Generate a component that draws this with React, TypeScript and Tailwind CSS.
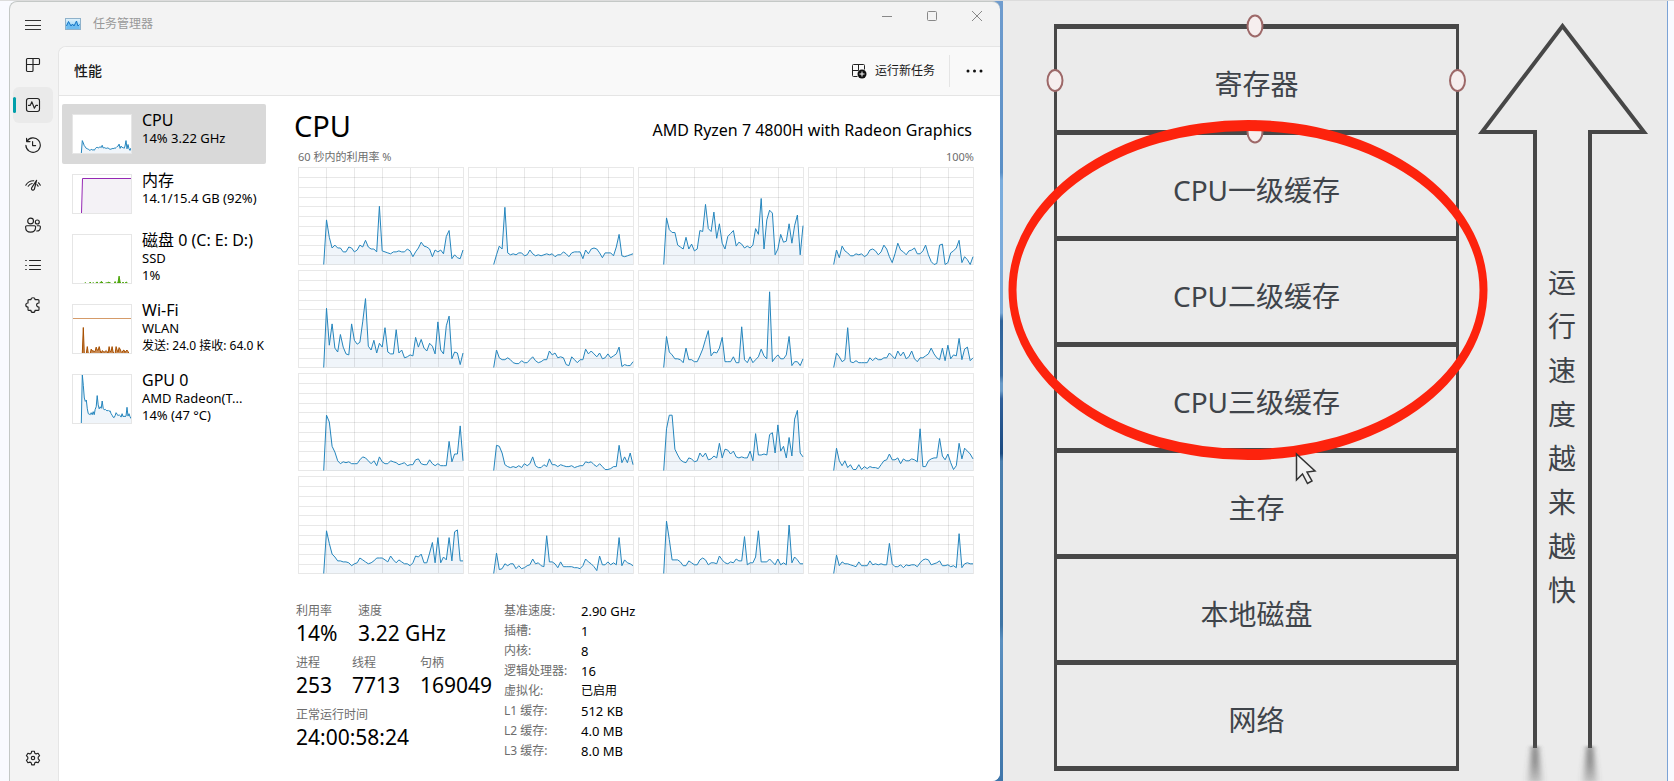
import { ReactNode } from "react";

const CORES: number[][] = [
  [0,46,28,17,20,17,17,13,13,18,17,13,15,20,18,25,18,16,16,13,60,14,13,12,11,13,13,14,13,13,16,14,8,13,17,23,19,18,16,8,15,13,15,11,29,35,6,10,7,6,15],
  [0,10,19,16,59,12,10,11,10,12,12,9,10,15,11,9,10,9,10,11,10,11,8,10,10,13,11,8,12,13,13,13,6,15,11,16,17,16,12,7,12,12,12,9,18,31,9,8,9,10,11],
  [0,48,36,33,33,20,18,16,28,16,21,14,16,35,34,62,37,34,54,27,42,22,16,29,32,35,19,23,21,17,19,17,20,37,31,68,16,46,56,53,10,16,31,23,24,42,22,40,51,10,40],
  [0,15,7,19,14,12,9,9,11,10,11,8,10,15,16,14,10,13,20,16,8,2,11,22,15,13,10,14,15,17,11,11,14,20,10,3,0,1,20,21,0,2,12,14,17,25,2,8,5,0,8],
  [0,61,23,45,20,16,34,21,14,13,45,28,24,26,47,71,22,18,28,15,25,21,41,16,14,14,39,15,18,10,11,13,12,31,21,29,20,17,25,22,14,47,18,14,43,53,9,16,15,3,15],
  [0,18,10,8,8,10,8,5,4,4,7,5,5,8,11,7,5,6,8,8,17,13,15,10,11,10,3,2,11,8,5,8,8,19,14,17,14,11,15,9,10,14,10,12,14,21,1,3,2,2,6],
  [0,32,16,13,9,9,8,5,20,8,8,6,6,12,19,29,38,12,16,15,20,31,6,6,6,11,5,5,42,8,5,11,5,8,11,19,12,9,78,6,10,13,9,9,13,32,2,6,6,2,9],
  [0,15,11,6,8,41,6,5,7,5,5,5,5,10,7,10,8,8,10,10,15,12,9,17,12,16,9,11,17,9,6,10,10,12,14,20,14,10,8,20,7,23,9,13,12,30,8,19,21,7,10],
  [0,57,50,25,19,10,7,9,8,9,7,7,7,11,14,13,10,7,10,5,14,9,7,7,10,9,8,6,7,8,5,6,6,11,12,7,6,6,11,7,5,7,5,5,5,30,9,17,17,46,10],
  [0,26,25,18,6,4,3,4,3,5,3,7,5,7,14,5,3,3,6,4,12,6,6,4,6,5,4,4,5,3,4,5,5,9,8,9,6,4,7,4,1,1,2,4,4,26,8,14,8,18,6],
  [0,43,57,57,22,16,11,9,8,13,12,9,10,18,14,18,11,12,15,13,28,13,22,21,17,20,14,13,14,13,13,20,10,38,16,16,17,16,37,39,18,47,20,25,13,34,15,53,62,18,14],
  [0,23,10,5,10,3,6,1,1,6,1,4,2,4,3,3,2,6,10,11,17,11,11,13,7,12,10,10,12,11,9,43,4,4,10,12,13,13,33,15,11,17,8,1,5,28,12,23,20,17,12],
  [0,44,31,20,17,13,13,12,12,11,8,10,11,16,14,12,10,11,13,16,16,16,14,12,18,14,11,14,12,10,10,8,11,18,17,20,11,11,21,32,11,37,11,17,14,37,13,43,45,13,13],
  [0,21,4,5,10,8,10,10,5,8,5,6,8,9,15,10,11,8,7,39,12,12,10,6,12,7,7,7,7,6,6,5,8,15,12,10,7,3,18,9,9,12,9,11,9,37,8,14,11,10,8],
  [0,54,35,14,14,14,12,8,8,13,11,9,9,14,16,14,9,11,11,10,18,14,11,10,12,11,15,13,13,38,9,11,11,17,44,12,12,12,15,12,9,15,9,11,9,50,11,17,14,10,10],
  [0,19,8,12,10,10,9,8,7,12,8,8,8,13,9,10,9,10,9,9,31,10,7,7,9,6,9,8,9,9,7,11,14,15,14,9,10,11,13,8,8,9,7,8,6,41,6,10,11,10,10],
];

const CPU_TOTAL = [0,33,27,20,17,13,12,11,9,8,11,9,10,8,12,15,16,14,16,17,15,21,14,15,14,13,14,14,12,11,11,13,12,14,13,15,18,19,24,13,19,15,16,13,19,33,12,23,12,8,14];
const DISK = [0,0,0,0,2,0,0,0,0,3,0,0,2,0,0,2,3,0,0,2,4,3,0,0,0,2,0,3,2,2,0,0,0,0,4,0,0,3,15,3,0,0,3,0,0,3,2,0,0,0,0];
const WIFI = [0,0,53,0,0,0,14,0,0,0,9,5,6,3,5,13,7,7,14,6,0,6,4,3,4,6,4,0,14,4,4,14,3,0,0,14,7,3,12,9,4,2,6,7,2,5,7,4,0,0,0];
const GPU = [0,100,78,52,45,48,30,20,19,18,22,18,24,18,29,34,57,38,30,34,31,46,31,28,29,27,26,27,25,26,20,17,13,12,16,22,19,16,18,16,13,20,14,15,14,15,33,15,20,14,10];

const toPoints = (data: number[], w: number, h: number) => {
  const start = w * 0.155;
  const step = (w - start - 1) / (data.length - 1);
  return data
    .map((v, i) => `${(start + i * step).toFixed(1)},${(h - 0.5 - (v * (h - 1)) / 100).toFixed(1)}`)
    .join(" ");
};

const CoreChart = ({ data }: { data: number[] }) => {
  const line = toPoints(data, 166, 98);
  return (
    <svg viewBox="0 0 166 98" preserveAspectRatio="none" className="block w-full h-[98px]">
      <rect width="166" height="98" fill="#fff" />
      <polygon points={`${line} 165,97.5 25.7,97.5`} fill="#f0f5fa" />
      <g stroke="#000" strokeOpacity="0.09" fill="none" shapeRendering="crispEdges">
        <path d="M28.5 1v96M56.5 1v96M84.5 1v96M112.5 1v96M140.500 1v96" />
        {[10, 20, 30, 39, 49, 59, 68, 78, 88].map((y) => (
          <line key={y} x1="1" x2="165" y1={y + 0.5} y2={y + 0.5} />
        ))}
        <rect x="0.5" y="0.5" width="165" height="97" />
      </g>
      <polyline points={line} fill="none" stroke="#2485bd" />
    </svg>
  );
};

type ThumbProps = { data: number[]; h: number; stroke: string; fill: string };

const Thumb = ({ data, h, stroke, fill }: ThumbProps) => {
  const line = toPoints(data, 60, h);
  return (
    <svg width="60" height={h} viewBox={`0 0 60 ${h}`} className="block shrink-0">
      <rect width="60" height={h} fill="#fff" />
      <polygon points={`${line} 59,${h - 1} 9.3,${h - 1}`} fill={fill} />
      <polyline points={line} fill="none" stroke={stroke} />
      <rect x="0.5" y="0.5" width="59" height={h - 1} fill="none" stroke="#e6e6e6" />
    </svg>
  );
};

const Icon = ({ children }: { children: ReactNode }) => (
  <svg
    width="16"
    height="16"
    viewBox="0 0 16 16"
    fill="none"
    stroke="#222"
    strokeWidth="1.15"
    strokeLinecap="round"
    strokeLinejoin="round"
  >
    {children}
  </svg>
);

const NAV = [
  {
    label: "进程",
    icon: (
      <Icon>
        <path d="M2.500 1.500h11a1 1 0 0 1 1 1v4a1 1 0 0 1-1 1H8v6a1 1 0 0 1-1 1H2.500a1 1 0 0 1-1-1v-11a1 1 0 0 1 1-1zM8 1.500v6M1.500 7.500H8" />
      </Icon>
    ),
  },
  {
    label: "性能",
    icon: (
      <Icon>
        <rect x="1.500" y="1.500" width="13" height="13" rx="2.200" />
        <path d="M3.500 8.400h1.800l1.500-3.600 2.600 6.400 1.500-2.800h1.600" />
      </Icon>
    ),
  },
  {
    label: "应用历史记录",
    icon: (
      <Icon>
        <path d="M1.600 1.200v3.400H5M1.900 4.400A7.200 7.200 0 1 1 .9 8.400M7.600 4.600v4h3" />
      </Icon>
    ),
  },
  {
    label: "启动应用",
    icon: (
      <Icon>
        <path d="M.8 8.200a9 9 0 0 1 8-4.400M3.200 9.200a6.400 6.400 0 0 1 4-2.700M13.400 5.800a9 9 0 0 1 1.900 2.400M12 7.600a6 6 0 0 1 1.100 1.600" />
        <path d="M11.600 3.400 6.800 10.600c-.6 1.100-.3 2 .5 2.400s1.800 0 2.100-1z" />
      </Icon>
    ),
  },
  {
    label: "用户",
    icon: (
      <Icon>
        <circle cx="5.600" cy="4" r="2.900" />
        <circle cx="12.300" cy="5" r="2" />
        <path d="M1.800 8.700h7.600a1.200 1.200 0 0 1 1.200 1.200c0 3-1.800 5.200-5 5.200s-5-2.200-5-5.200a1.200 1.200 0 0 1 1.200-1.200zM12.200 8.700h2a1.200 1.200 0 0 1 1.200 1.200c0 2.400-1.300 4.100-3.700 4.100" />
      </Icon>
    ),
  },
  {
    label: "详细信息",
    icon: (
      <Icon>
        <path d="M4.500 3.500h11M4.500 8.500h11M4.500 12.500h11M.7 3.500h.6M.7 8.500h.6M.7 12.500h.6" />
      </Icon>
    ),
  },
  {
    label: "服务",
    icon: (
      <Icon>
        <path d="M6 2.600C6 1.400 6.900.7 8 .7s2 .7 2 1.900h3a1 1 0 0 1 1 1V6c-1.300-.1-2.400.7-2.400 2s1.100 2.100 2.400 2v2.400a1 1 0 0 1-1 1h-3c0 1.300-.9 2-2 2s-2-.7-2-2H4a1 1 0 0 1-1-1V10c-1.300 0-2.200-.9-2.200-2S1.700 6 3 6V3.600a1 1 0 0 1 1-1z" />
      </Icon>
    ),
  },
];

const SettingsIcon = () => (
  <Icon>
    <circle cx="8" cy="8" r="1.700" />
    <path d="M6.700 1.200h2.600l.5 2 1.300.7 2-.6 1.500 2.400L13.200 7.200v1.600l1.400 1.500-1.500 2.400-2-.6-1.300.7-.5 2H6.700l-.5-2-1.300-.7-2 .6-1.500-2.400 1.400-1.500V7.200L1.400 5.700l1.500-2.400 2 .6 1.300-.7z" />
  </Icon>
);

const DEVICES = [
  {
    name: "CPU",
    lines: ["14% 3.22 GHz"],
    thumb: <Thumb data={CPU_TOTAL} h={40} stroke="#2485bd" fill="#f0f5fa" />,
  },
  {
    name: "内存",
    lines: ["14.1/15.4 GB (92%)"],
    thumb: (
      <svg width="60" height="40" className="block shrink-0">
        <rect x="0.500" y="0.500" width="59" height="39" fill="#fff" stroke="#e6e6e6" />
        <path d="M9.500 39 10.500 4.500H59V39z" fill="#f4f2f6" />
        <path d="M9.500 39 10.500 4.500H59" fill="none" stroke="#9528b4" />
      </svg>
    ),
  },
  {
    name: "磁盘 0 (C: E: D:)",
    lines: ["SSD", "1%"],
    thumb: <Thumb data={DISK} h={50} stroke="#4da60c" fill="#4da60c" />,
  },
  {
    name: "Wi-Fi",
    lines: ["WLAN"],
    rate: "发送: 24.0 接收: 64.0 K",
    thumb: (
      <span className="relative shrink-0">
        <Thumb data={WIFI} h={50} stroke="#a74f01" fill="#c98b55" />
        <span className="absolute left-px right-px top-3.5 h-px bg-[#d59b69]" />
      </span>
    ),
  },
  {
    name: "GPU 0",
    lines: ["AMD Radeon(T...", "14% (47 °C)"],
    thumb: <Thumb data={GPU} h={50} stroke="#2485bd" fill="#f0f5fa" />,
  },
];

const STATS = [
  [
    { label: "利用率", value: "14%", width: "w-[62px]" },
    { label: "速度", value: "3.22 GHz", width: "w-[100px]" },
  ],
  [
    { label: "进程", value: "253", width: "w-14" },
    { label: "线程", value: "7713", width: "w-[68px]" },
    { label: "句柄", value: "169049", width: "w-20" },
  ],
  [{ label: "正常运行时间", value: "24:00:58:24", width: "w-40" }],
];

const SPECS = [
  ["基准速度:", "2.90 GHz"],
  ["插槽:", "1"],
  ["内核:", "8"],
  ["逻辑处理器:", "16"],
  ["虚拟化:", "已启用"],
  ["L1 缓存:", "512 KB"],
  ["L2 缓存:", "4.0 MB"],
  ["L3 缓存:", "8.0 MB"],
];

const LEVELS = ["寄存器", "CPU一级缓存", "CPU二级缓存", "CPU三级缓存", "主存", "本地磁盘", "网络"];

const NavRail = () => (
  <nav className="flex flex-col items-center w-[49px] shrink-0 pr-[3px] pb-[5px]">
    <button aria-label="打开导航" className="flex items-center justify-center w-10 h-[45px]">
      <svg width="16" height="12" viewBox="0 0 16 12" stroke="#333" shapeRendering="crispEdges">
        <path d="M0 1.500h16M0 6.500h16M0 10.500h16" />
      </svg>
    </button>
    <div className="flex flex-col gap-1">
      {NAV.map(({ label, icon }) => (
        <button
          key={label}
          aria-label={label}
          className={
            label === "性能"
              ? "relative flex items-center justify-center w-10 h-9 rounded-md bg-[#eaeaea]"
              : "flex items-center justify-center w-10 h-9"
          }
        >
          {label === "性能" && (
            <span className="absolute left-0 top-2.5 w-[3px] h-4 rounded-full bg-[#009faa]" />
          )}
          {icon}
        </button>
      ))}
    </div>
    <button aria-label="设置" className="flex items-center justify-center w-10 h-9 mt-auto">
      <SettingsIcon />
    </button>
  </nav>
);

const TitleBar = () => (
  <header className="flex items-center h-11 pl-1.5 pr-[13px]">
    <svg width="16" height="12" viewBox="0 0 16 12">
      <defs>
        <linearGradient id="logo" x1="0" y1="0" x2="0" y2="1">
          <stop offset="0" stopColor="#e2f3fc" />
          <stop offset="1" stopColor="#7ec8f2" />
        </linearGradient>
      </defs>
      <rect x="0.500" y="0.500" width="15" height="11" fill="url(#logo)" stroke="#8fb2cb" />
      <path d="M1.500 8 3.500 3.500 6 8l1.500-2L9 8l2.500-5L13 8l1.500-1.500V11h-13z" fill="#6dbcf0" />
      <path d="M1.500 8 3.500 3.500 6 8l1.500-2L9 8l2.500-5L13 8l1.500-1.500" fill="none" stroke="#1476c6" />
    </svg>
    <h1 className="ml-3 text-xs text-[#999]">任务管理器</h1>
    <div className="flex items-center gap-[25px] ml-auto mb-4">
      <button aria-label="最小化" className="p-1 h-5">
        <svg width="12" height="12" stroke="#888"><path d="M1 6.500h10" /></svg>
      </button>
      <button aria-label="最大化" className="p-1 h-5">
        <svg width="12" height="12" fill="none" stroke="#888"><rect x="1.500" y="1.500" width="9" height="9" rx="1" /></svg>
      </button>
      <button aria-label="关闭" className="p-1 h-5">
        <svg width="12" height="12" stroke="#888"><path d="m1 1 10 10M11 1 1 11" /></svg>
      </button>
    </div>
  </header>
);

const Toolbar = () => (
  <div className="flex items-center h-[49px] shrink-0 pl-[15px] pr-[17px] bg-[#f9f9f9] border-b border-[#e5e5e5] rounded-tl-lg">
    <h2 className="text-sm font-medium text-[#1a1a1a]">性能</h2>
    <button className="flex items-center gap-2 ml-auto text-xs text-[#1a1a1a]">
      <svg width="16" height="16" viewBox="0 0 16 16" fill="none" stroke="#222">
        <path d="M6.500 13.500h-4a1 1 0 0 1-1-1v-10a1 1 0 0 1 1-1h10a1 1 0 0 1 1 1v4M7.500 1.500v6M1.500 7.500h6" />
        <circle cx="11" cy="11" r="4.500" fill="#111" stroke="none" />
        <path d="M11 8.500v5M8.500 11h5" stroke="#fff" />
      </svg>
      运行新任务
    </button>
    <span className="w-px h-8 ml-[14px] bg-[#e5e5e5]" />
    <button aria-label="更多" className="ml-4">
      <svg width="17" height="16" fill="#111">
        <circle cx="2" cy="8" r="1.500" />
        <circle cx="8.500" cy="8" r="1.500" />
        <circle cx="15" cy="8" r="1.500" />
      </svg>
    </button>
  </div>
);

const DeviceList = () => (
  <div className="w-[210px] shrink-0 pt-2 pl-[3px] overflow-hidden">
    {DEVICES.map(({ name, lines, rate, thumb }, i) => (
      <button
        key={name}
        className={
          i === 0
            ? "flex w-[204px] h-[60px] pl-2.5 text-left rounded-xs bg-[#d9d9d9]"
            : i === 1
              ? "flex w-[204px] h-[60px] pl-2.5 text-left"
              : "flex w-[204px] h-[70px] pl-2.5 text-left"
        }
      >
        <span className="pt-2.5">{thumb}</span>
        <span className="pt-1.5 pl-2.5 whitespace-nowrap text-black">
          <span className="block text-base leading-5">{name}</span>
          {lines.map((l) => (
            <span key={l} className="block text-[13px] leading-[17px]">{l}</span>
          ))}
          {rate && <span className="block text-xs leading-[17px]">{rate}</span>}
        </span>
      </button>
    ))}
  </div>
);

const CpuDetails = () => (
  <main className="flex-1 min-w-0 pt-2.5 pl-[29px] pr-[26px]">
    <div className="flex items-center justify-between h-10 -ml-1 text-black">
      <h3 className="text-[29px] leading-9">CPU</h3>
      <p className="pt-2 pr-0.5 text-base">AMD Ryzen 7 4800H with Radeon Graphics</p>
    </div>
    <div className="flex justify-between pt-0.5 text-[11px] leading-[18px] text-[#6d6d6d]">
      <span>60 秒内的利用率 %</span>
      <span>100%</span>
    </div>
    <div className="grid grid-cols-4 gap-x-1 gap-y-[5px] mt-px">
      {CORES.map((data, i) => (
        <CoreChart key={i} data={data} />
      ))}
    </div>
    <div className="flex mt-[27px]">
      <dl className="flex flex-col gap-2 w-[208px] -ml-0.5">
        {STATS.map((row) => (
          <div key={row[0].label} className="flex">
            {row.map(({ label, value, width }) => (
              <div key={label} className={width}>
                <dt className="text-xs leading-5 text-[#6d6d6d]">{label}</dt>
                <dd className="text-[21px] leading-6 text-black">{value}</dd>
              </div>
            ))}
          </div>
        ))}
      </dl>
      <table className="self-start text-xs leading-5 text-black">
        <tbody>
          {SPECS.map(([label, value]) => (
            <tr key={label} className="h-5">
              <th scope="row" className="w-[77px] p-0 text-left font-normal text-[#6d6d6d] whitespace-nowrap">{label}</th>
              <td className={value === "已启用" ? "p-0" : "p-0 text-[13px] leading-5"}>{value}</td>
            </tr>
          ))}
        </tbody>
      </table>
    </div>
  </main>
);

const MemoryDiagram = () => (
  <section className="relative flex pt-[23px] pl-[51px] bg-[#ebebeb] border-r border-[#7ba3d6] overflow-hidden">
    <ol className="w-[405px] h-[747px] shrink-0 border-x-[3px] border-t-[5px] border-[#474747]">
      {LEVELS.map((level) => (
        <li
          key={level}
          className="flex items-center justify-center h-[106px] pt-2 border-b-[5px] border-[#474747] text-[28px] text-[#3f444a]"
        >
          {level}
        </li>
      ))}
    </ol>
    <p className="w-7 ml-[89px] pt-[236px] text-[28px] leading-[44px] text-[#3f444a]">运行速度越来越快</p>
    <svg viewBox="0 1 664 780" width="664" height="780" className="absolute left-0 top-0" fill="none">
      <defs>
        <linearGradient id="fade" x1="0" y1="0" x2="0" y2="1">
          <stop offset="0" stopColor="#555" />
          <stop offset="1" stopColor="#555" stopOpacity="0.250" />
        </linearGradient>
        <filter id="soft" x="-100%" width="300%">
          <feGaussianBlur stdDeviation="3 1" />
        </filter>
      </defs>
      <path d="M532 748V132H479L559.500 26 641 132h-54v616" stroke="#474747" strokeWidth="4" />
      <g fill="url(#fade)" filter="url(#soft)">
        <path d="M530 746h4l5 36h-14zM585 746h4l5 36h-14z" />
      </g>
      <g fill="#f6eeee" stroke="#9d6868" strokeWidth="2">
        <ellipse cx="252" cy="26" rx="7.500" ry="10.500" />
        <ellipse cx="52" cy="80.500" rx="7.500" ry="10.500" />
        <ellipse cx="454.500" cy="80.500" rx="7.500" ry="10.500" />
        <ellipse cx="252" cy="132" rx="7.500" ry="10.500" />
      </g>
      <path
        fill="#fd230d"
        fillRule="evenodd"
        d="M5.500 290a239.500 170 0 1 1 479 0a239.500 170 0 1 1-479 0zM13.500 290a231.500 159 0 1 0 463 0a231.500 159 0 1 0-463 0z"
      />
      <path
        d="M293.500 454v26l6-6 5 9.500 4.500-2.500-5-9 8-1z"
        fill="#f2f2f2"
        stroke="#333"
        strokeWidth="1.500"
      />
    </svg>
  </section>
);

export default function App() {
  return (
    <div className="grid grid-cols-[1003fr_671fr] min-h-screen bg-[#f9faff] font-['Noto_Sans','Noto_Sans_CJK_SC',sans-serif]">
      <div className="flex pl-[9px] border-t border-[#dcdcdc] bg-[linear-gradient(#6f9cce,#5a8fc6_22%,#7baddd_23%,#7aa9d8_40%,#2d6299_41%,#3a6da3_48%,#6a9bc8_49%,#6a9bc8_50%,#2f5f9a_51%,#1b4a80_58%,#4a7fae_59%,#3f75a5_80%,#5b90c0_82%,#3f76aa)] bg-[length:12px_100%] bg-right bg-no-repeat">
        <div className="flex flex-1 min-w-0 mr-[3px] bg-[#f3f3f3] border-t border-l border-[#c4c8c6] rounded-t-lg rounded-br-lg overflow-hidden">
          <NavRail />
          <div className="flex flex-col flex-1 min-w-0">
            <TitleBar />
            <div className="flex flex-col flex-1 -ml-px bg-white border-t border-l border-[#e5e5e5] rounded-tl-lg">
              <Toolbar />
              <div className="flex flex-1">
                <DeviceList />
                <CpuDetails />
              </div>
            </div>
          </div>
        </div>
      </div>
      <div className="grid pr-1.5 border-t border-[#dcdcdc]">
        <MemoryDiagram />
      </div>
    </div>
  );
}
